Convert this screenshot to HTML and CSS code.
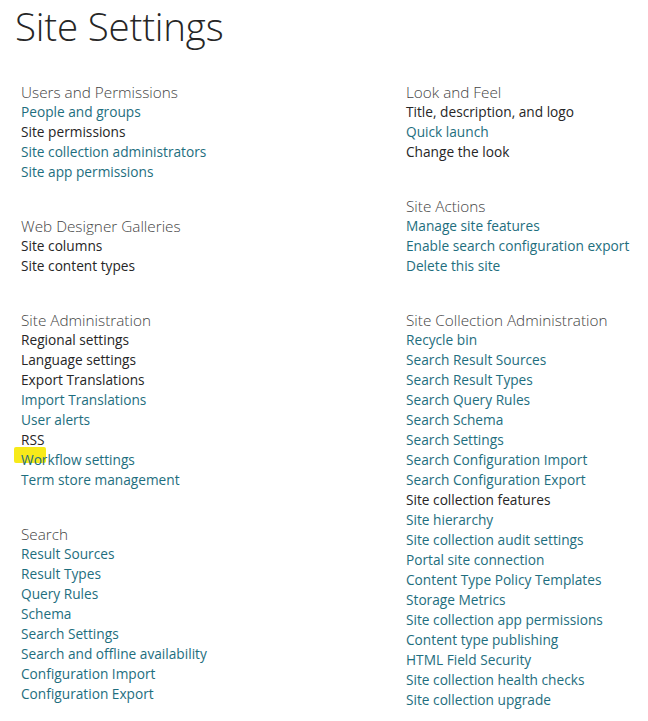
FILE: index.html
```html
<!DOCTYPE html>
<html>
<head>
<meta charset="utf-8">
<link rel="stylesheet" href="styles.css">
</head>
<body>
<h1 class="page-title">Site Settings</h1>
<div class="columns">
  <div class="column">
    <section class="group">
      <h2 class="group-title">Users and Permissions</h2>
      <ul class="links">
        <li><a class="link">People and groups</a></li>
        <li><a class="link plain">Site permissions</a></li>
        <li><a class="link">Site collection administrators</a></li>
        <li><a class="link">Site app permissions</a></li>
      </ul>
    </section>
    <section class="group">
      <h2 class="group-title">Web Designer Galleries</h2>
      <ul class="links">
        <li><a class="link plain">Site columns</a></li>
        <li><a class="link plain">Site content types</a></li>
      </ul>
    </section>
    <section class="group">
      <h2 class="group-title">Site Administration</h2>
      <ul class="links">
        <li><a class="link plain">Regional settings</a></li>
        <li><a class="link plain">Language settings</a></li>
        <li><a class="link plain">Export Translations</a></li>
        <li><a class="link">Import Translations</a></li>
        <li><a class="link">User alerts</a></li>
        <li><a class="link plain">RSS</a></li>
        <li class="marked"><span class="highlight"></span><a class="link">Workflow settings</a></li>
        <li><a class="link">Term store management</a></li>
      </ul>
    </section>
    <section class="group">
      <h2 class="group-title">Search</h2>
      <ul class="links">
        <li><a class="link">Result Sources</a></li>
        <li><a class="link">Result Types</a></li>
        <li><a class="link">Query Rules</a></li>
        <li><a class="link">Schema</a></li>
        <li><a class="link">Search Settings</a></li>
        <li><a class="link">Search and offline availability</a></li>
        <li><a class="link">Configuration Import</a></li>
        <li><a class="link">Configuration Export</a></li>
      </ul>
    </section>
  </div>
  <div class="column">
    <section class="group">
      <h2 class="group-title">Look and Feel</h2>
      <ul class="links">
        <li><a class="link plain">Title, description, and logo</a></li>
        <li><a class="link">Quick launch</a></li>
        <li><a class="link plain">Change the look</a></li>
      </ul>
    </section>
    <section class="group">
      <h2 class="group-title">Site Actions</h2>
      <ul class="links">
        <li><a class="link">Manage site features</a></li>
        <li><a class="link">Enable search configuration export</a></li>
        <li><a class="link">Delete this site</a></li>
      </ul>
    </section>
    <section class="group">
      <h2 class="group-title">Site Collection Administration</h2>
      <ul class="links">
        <li><a class="link">Recycle bin</a></li>
        <li><a class="link">Search Result Sources</a></li>
        <li><a class="link">Search Result Types</a></li>
        <li><a class="link">Search Query Rules</a></li>
        <li><a class="link">Search Schema</a></li>
        <li><a class="link">Search Settings</a></li>
        <li><a class="link">Search Configuration Import</a></li>
        <li><a class="link">Search Configuration Export</a></li>
        <li><a class="link plain">Site collection features</a></li>
        <li><a class="link">Site hierarchy</a></li>
        <li><a class="link">Site collection audit settings</a></li>
        <li><a class="link">Portal site connection</a></li>
        <li><a class="link">Content Type Policy Templates</a></li>
        <li><a class="link">Storage Metrics</a></li>
        <li><a class="link">Site collection app permissions</a></li>
        <li><a class="link">Content type publishing</a></li>
        <li><a class="link">HTML Field Security</a></li>
        <li><a class="link">Site collection health checks</a></li>
        <li><a class="link">Site collection upgrade</a></li>
      </ul>
    </section>
  </div>
</div>
</body>
</html>
```

FILE: styles.css
```css
html, body {
  margin: 0;
  padding: 0;
  background: #ffffff;
}
body {
  font-family: "Open Sans", "Noto Sans", "Liberation Sans", sans-serif;
  color: #262626;
}
.page-title {
  margin: 0;
  padding: 0 0 0 15px;
  height: 82px;
  font-size: 38.5px;
  font-weight: 300;
  line-height: 52px;
  color: #262626;
  letter-spacing: -0.2px;
}
.columns {
  display: grid;
  grid-template-columns: 385px 1fr;
  padding-left: 21px;
}
.group {
  margin-bottom: 34px;
}
.group-title {
  margin: 0;
  font-size: 15.3px;
  font-weight: 300;
  line-height: 20px;
  color: #444444;
}
.links {
  list-style: none;
  margin: 0;
  padding: 0;
}
.links li {
  line-height: 20px;
  font-size: 13.7px;
  white-space: nowrap;
}
.link {
  color: #1e6e7e;
  text-decoration: none;
}
.link.plain {
  color: #262626;
}
.marked {
  position: relative;
  z-index: 0;
}
.highlight {
  position: absolute;
  left: -7px;
  top: -3px;
  width: 32px;
  height: 16px;
  background: #f7ea1a;
  border-radius: 2px;
  z-index: -1;
}
```
